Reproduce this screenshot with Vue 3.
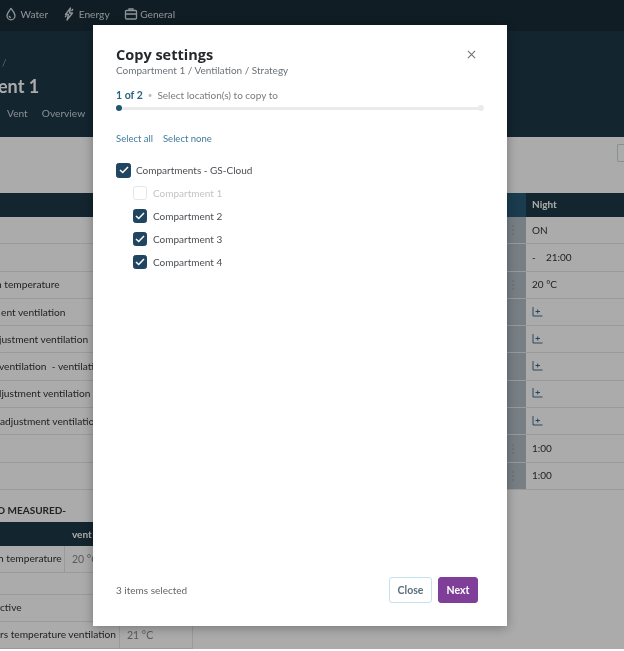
<script setup>
const navs = [
  { label: 'Water', d: 'M7 1.500C5 4.200 3 6.200 3 8.800a4 4 0 0 0 8 0C11 6.200 9 4.200 7 1.500ZM5.200 8.800a1.800 1.800 0 0 0 1.800 1.800' },
  { label: 'Energy', d: 'M8.500 1 3.500 7.500h3L5 13l5.500-7h-3ZM11 2 9.500 4M3 10l1.500-1.500' },
]
const upperRows = [
  { label: '', indent: 0, value: 'ON', grip: true },
  { label: '', indent: 0, value: '-    21:00', grip: false },
  { label: 'n temperature', indent: -4, value: '20 °C', grip: true },
  { label: 'ent ventilation', indent: 1, chart: true },
  { label: 'justment ventilation', indent: -1, chart: true },
  { label: 'ventilation  - ventilation', indent: -1, chart: true },
  { label: 'ljustment ventilation', indent: -1, chart: true },
  { label: 'adjustment ventilation', indent: 0, chart: true },
  { label: '', indent: 0, value: '1:00', grip: true },
  { label: '', indent: 0, value: '1:00', grip: true },
]
const compartments = [
  { label: 'Compartment 1', checked: false },
  { label: 'Compartment 2', checked: true },
  { label: 'Compartment 3', checked: true },
  { label: 'Compartment 4', checked: true },
]
</script>

<template>
  <div class="page">
    <nav class="topbar">
      <span v-for="n in navs" :key="n.label" class="nav-item">
        <svg width="14" height="14" viewBox="0 0 14 14" fill="none" stroke="currentColor" stroke-width="1.300"><path :d="n.d" stroke-linejoin="round" /></svg>
        {{ n.label }}
      </span>
      <span class="nav-item">
        <svg width="14" height="14" viewBox="0 0 14 14" fill="none" stroke="currentColor" stroke-width="1.300"><rect x="1.500" y="3.500" width="11" height="8.500" rx="1" /><path d="M5 3.500V2h4v1.500M1.500 7h11M7 6.300v1.400" /></svg>
        General
      </span>
    </nav>
    <header class="hero">
      <div class="crumb">/</div>
      <h1>ent 1</h1>
      <div class="tabs"><span>Vent</span><span>Overview</span></div>
    </header>
    <main class="content">
      <div class="toolbar"><span class="tool-btn"></span></div>
      <section class="table-upper">
        <div class="thead"><span class="th-handle"></span><span class="th-night">Night</span></div>
        <div v-for="(r, i) in upperRows" :key="i" class="row">
          <span class="row-label"><span :style="{ marginLeft: r.indent + 'px' }">{{ r.label }}</span></span>
          <span class="handle"><i v-if="r.grip" class="grip"></i></span>
          <span class="night">
            <svg v-if="r.chart" class="chart" width="11" height="10" viewBox="0 0 11 10" fill="none" stroke="currentColor" stroke-width="0.900"><path d="M1 0v9h9.500M3.500 4.500h4.500M5.700 2.500v4" /></svg>
            <template v-else>{{ r.value }}</template>
          </span>
        </div>
      </section>
      <h2 class="measured">O MEASURED-</h2>
      <section class="table-lower">
        <div class="lower-head"><span>vent</span></div>
        <div class="lower-row first"><span class="lower-label">n temperature</span><span class="lower-value">20 °C</span></div>
        <div class="lower-gap"></div>
        <div class="lower-row active"><span class="lower-label">ctive</span></div>
        <div class="lower-row wide"><span class="lower-label">rs temperature ventilation</span><span class="lower-value">21 °C</span></div>
      </section>
    </main>

    <div class="backdrop"></div>
    <div class="modal">
      <div class="modal-body">
        <div class="modal-head">
          <div>
            <h3>Copy settings</h3>
            <p class="path">Compartment 1 / Ventilation / Strategy</p>
          </div>
          <svg class="close" width="9" height="9" viewBox="0 0 10 10" stroke="currentColor" stroke-width="1.200"><path d="M1 1l8 8M9 1l-8 8" /></svg>
        </div>
        <div class="step"><b>1 of 2</b><span class="dot">•</span><span>Select location(s) to copy to</span></div>
        <div class="progress"><i class="start"></i><i class="end"></i></div>
        <div class="links"><span>Select all</span><span>Select none</span></div>
        <div class="tree">
          <label class="check parent">
            <span class="box on"><svg width="10" height="8" viewBox="0 0 10 8" fill="none" stroke="#fff" stroke-width="1.500"><path d="M1 4l2.700 2.500L9 1" /></svg></span>
            Compartments - GS-Cloud
          </label>
          <div class="children">
            <label v-for="c in compartments" :key="c.label" class="check" :class="{ off: !c.checked }">
              <span class="box" :class="{ on: c.checked }"><svg v-if="c.checked" width="10" height="8" viewBox="0 0 10 8" fill="none" stroke="#fff" stroke-width="1.500"><path d="M1 4l2.700 2.500L9 1" /></svg></span>
              {{ c.label }}
            </label>
          </div>
        </div>
      </div>
      <footer class="modal-foot">
        <span>3 items selected</span>
        <div class="actions"><button class="btn-close">Close</button><button class="btn-next">Next</button></div>
      </footer>
    </div>
  </div>
</template>

<style scoped>
.page {
  position: relative;
  width: 624px;
  height: 651px;
  overflow: hidden;
  background: #fff;
  font-family: Lato, "Liberation Sans", sans-serif;
  font-size: 10px;
  color: #333;
  filter: blur(0.35px);
}
.topbar {
  height: 31px;
  background: #182c38;
  display: flex;
  align-items: center;
  gap: 14px;
  padding-left: 4px;
  color: #d4dbde;
  font-size: 10.200px;
  padding-bottom: 3px;
  box-sizing: border-box;
}
.nav-item { display: flex; align-items: center; gap: 2.500px; }
.hero {
  height: 106px;
  background: #1d3847;
  color: #fff;
  position: relative;
  overflow: hidden;
}
.crumb { color: #6f9ab5; padding: 24px 0 0 2px; height: 14px; line-height: 14px; }
.hero h1 {
  margin: 5px 0 0 -2px;
  font-size: 18px;
  line-height: 24px;
  font-weight: 700;
}
.tabs { display: flex; gap: 14px; margin-top: 9px; padding-left: 7px; color: #cbd5db; font-size: 10.200px; }
.content { background: #fff; height: 512px; position: relative; }
.toolbar { height: 56px; display: flex; justify-content: flex-end; padding-top: 7px; box-sizing: border-box; }
.tool-btn { width: 6px; height: 16px; border: 1px solid #ccd6dc; border-right: 0; border-radius: 2px 0 0 2px; }
.thead { height: 24px; background: #1d3847; display: flex; padding-left: 507px; color: #fff; font-weight: 700; line-height: 23px; }
.th-handle { width: 19px; background: #285a75; }
.th-night { padding-left: 6px; }
.row { height: 27.300px; box-sizing: border-box; border-bottom: 1px solid #e6e6e6; display: flex; align-items: center; }
.row-label { width: 507px; flex: none; overflow: hidden; white-space: pre; font-size: 10.200px; margin-top: -1px; }
.handle { width: 19px; height: 100%; flex: none; background: #b2bec6; display: flex; align-items: center; justify-content: center; }
.grip { width: 2px; height: 2px; border-radius: 50%; background: #a0a7ac; box-shadow: 0 -4px #a0a7ac, 0 4px #a0a7ac; margin-left: -7px; }
.night { padding-left: 6px; white-space: pre; margin-top: -1px; }
.chart { color: #2c5f80; display: block; }
.measured { margin: 13px 0 0 -3px; height: 14px; font-size: 10px; line-height: 14px; font-weight: 700; color: #333; }
.table-lower { margin-top: 5px; position: relative; }
.lower-head { height: 24px; background: #1d3847; color: #fff; font-weight: 700; line-height: 24px; padding-left: 72px; width: 193px; box-sizing: border-box; }
.lower-row { display: flex; align-items: center; box-sizing: border-box; border-bottom: 1px solid #e6e6e6; }
.lower-row.first { height: 27px; width: 193px; }
.lower-gap { height: 22px; border-bottom: 1px solid #e6e6e6; width: 193px; box-sizing: border-box; }
.lower-row.active { height: 27px; width: 193px; }
.lower-row.wide { height: 27px; width: 193px; border-right: 1px solid #e6e6e6; }
.lower-label { white-space: pre; font-size: 10.200px; align-self: stretch; display: flex; align-items: center; border-right: 1px solid #e6e6e6; box-sizing: border-box; padding-bottom: 2px; }
.active .lower-label { border-right: 0; }
.first .lower-label { width: 67px; margin-left: -2px; flex: none; }
.wide .lower-label { width: 120px; flex: none; }
.lower-value { color: #888; padding-left: 7px; font-size: 10.500px; }

.backdrop { position: absolute; left: 0; right: 0; top: 0; bottom: 2px; background: rgba(0, 0, 0, 0.33); }
.modal {
  position: absolute;
  left: 93px;
  top: 25px;
  width: 414px;
  height: 601px;
  background: #fff;
  box-shadow: 0 2px 10px rgba(0, 0, 0, 0.3);
  box-sizing: border-box;
  display: flex;
  flex-direction: column;
  justify-content: space-between;
  padding: 0 29px 23px 23px;
}
.modal-head { display: flex; justify-content: space-between; align-items: flex-start; padding-top: 20px; }
h3 { margin: 0; font-family: "Open Sans", sans-serif; font-size: 14.500px; line-height: 19px; font-weight: 700; color: #26292c; }
.path { margin: 0; font-size: 10px; line-height: 12px; color: #6d7378; }
.close { color: #6c7278; margin-top: 5px; margin-right: 2px; }
.step { display: flex; align-items: center; margin-top: 13px; height: 12px; line-height: 12px; color: #777c80; font-size: 10px; }
.step b { color: #2c6280; font-weight: 700; font-size: 10.500px; }
.dot { margin: 0 5px; color: #bbb; font-size: 8px; }
.progress { position: relative; height: 3px; margin: 5.500px -6px 0 0; background: #ebebeb; border-radius: 2px; }
.progress i { position: absolute; top: -1.500px; width: 6px; height: 6px; border-radius: 50%; }
.start { left: 0; background: #1f5674; }
.end { right: 0; background: #ebebeb; }
.links { display: flex; gap: 10px; margin-top: 22px; color: #3f7b9e; font-size: 9.500px; line-height: 13px; }
.tree { margin-top: 14px; }
.check { display: flex; align-items: center; gap: 6px; height: 23px; font-size: 10px; color: #4a4e52; }
.parent { gap: 5px; }
.parent .box { width: 15px; height: 15px; }
.children { padding-left: 17px; }
.off { color: #c4c4c4; }
.box { width: 14px; height: 14px; box-sizing: border-box; border: 1px solid #e6e6e6; border-radius: 2.500px; background: #fff; display: flex; align-items: center; justify-content: center; flex: none; }
.box.on { background: #1f4560; border-color: #1f4560; }
.modal-foot { display: flex; justify-content: space-between; align-items: center; color: #666; font-size: 10px; }
.actions { display: flex; gap: 6px; }
button { height: 26px; border-radius: 3px; font: 700 10.500px Lato, "Liberation Sans", sans-serif; padding: 0; }
.btn-close { width: 43px; background: #fff; border: 1px solid #c5e1ee; color: #5c6f7c; }
.btn-next { width: 40px; background: #7f3f98; border: 1px solid #7f3f98; color: #fff; }
</style>

<style>
html, body { margin: 0; }
</style>
